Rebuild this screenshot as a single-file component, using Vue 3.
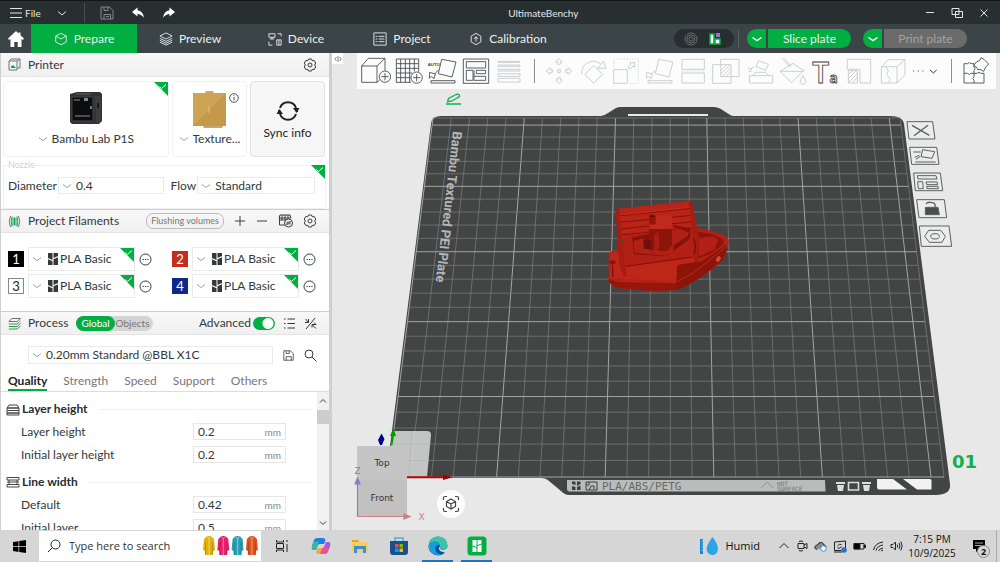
<script setup>
import { ref } from 'vue'

const tabs = [
  { name: 'Prepare', d: 'M8 1.5 14 4.5V11.5L8 14.5 2 11.5V4.5ZM2 4.5 8 8 14 4.5' },
  { name: 'Preview', d: 'M8 1 15 4.5 8 8 1 4.5ZM1 7.2 8 10.7 15 7.2M1 9.4 8 12.9 15 9.4M1 11.6 8 15 15 11.6' },
  { name: 'Device', d: 'M1 2H8V6H1ZM4.5 6V8M2 8H7M11 2H15V5M1 11V15H5M10 9H15V15H10ZM12.5 9V15' },
  { name: 'Project', d: 'M1 1H15V15H1ZM3 5H5M6.5 5H13M3 8H5M6.5 8H13M3 11H5M6.5 11H13' },
  { name: 'Calibration', d: 'M8 1.5 13.5 4.7V11.3L8 14.5 2.5 11.3V4.7ZM8 5V11M5.5 8 8 5.5 10.5 8' },
]
const activeTab = ref('Prepare')

const tools = [
  { name: 'Add', x: 90, d: 'M92 198H138V247H92ZM92 198 112 175H162L138 198M162 175V212M138 247 146 240M162 213A17 17 0 1 0 162 247 17 17 0 1 0 162 213M162 219V241M151 230H173' },
  { name: 'Add plate', x: 189, d: 'M196 177H263V215M196 177V247H240M209 177V247M223 177V247M236 177V247M250 177V214M196 191H263M196 205H263M196 219H244M196 233H239M257 216A17 17 0 1 0 257 250 17 17 0 1 0 257 216M257 222V244M246 233H268' },
  { name: 'Auto orient', x: 291, auto: true, d: 'M335 178 378 186 366 231 325 221ZM303 242H375V249H303ZM299 217 316 222 312 236 304 229 298 235ZM314 222 325 210' },
  { name: 'Arrange', x: 390, d: 'M397 177H473V250H397ZM406 185H464V204H406ZM406 211H426V241H406ZM436 211H464V221H436ZM429 229H464V241H429ZM429 211V229' },
  { name: 'Split to objects', x: 491, off: true, d: 'M503 184H569V187H503ZM503 195H569V199H503ZM503 208H569V213H503ZM503 221H569V229H503ZM503 235H569V246H503Z' },
  { sep: true },
  { name: 'Move', x: 644, off: true, d: 'M685 193V186H679L689 175 699 186H693V193ZM685 233V240H679L689 251 699 240H693V233ZM669 209H662V203L650 213 662 223V217H669ZM709 209H716V203L728 213 716 223V217H709ZM685 209H693V217H685Z' },
  { name: 'Rotate', x: 743, off: true, d: 'M790 197 817 223 790 249 763 223ZM754 222A35 35 0 0 1 811 192M802 205H826L820 183Z' },
  { name: 'Scale', x: 843, off: true, d: 'M851 209H892V250H851ZM897 205 894 201 903 193 899 188H914V202L909 198 901 206Z', dash: 'M851 201V177H925V250H898' },
  { name: 'Lay on face', x: 943, off: true, d: 'M987 178 1030 186 1018 231 977 221ZM955 242H1027V249H955ZM951 217 968 222 964 236 956 229 950 235ZM966 222 977 210' },
  { name: 'Cut', x: 1043, off: true, d: 'M1055 178H1122V208H1055ZM1055 219H1122V249H1055Z', dash: 'M1055 213H1122' },
  { name: 'Mesh boolean', x: 1145, off: true, d: 'M1174 178H1229V230H1174ZM1150 194H1205V250H1150ZM1174 212 1192 194M1174 222 1202 194M1178 230 1205 203M1190 230 1205 215' },
  { name: 'Assemble', x: 1245, off: true, d: 'M1261 227H1331V249H1261ZM1288 182 1318 193 1310 211 1281 200ZM1272 227 1279 217H1310L1319 227M1256 203 1268 207 1264 216 1258 212M1266 207 1275 200' },
  { name: 'Color painting', x: 1345, off: true, d: 'M1351 214 1390 190 1422 212 1385 248ZM1351 214H1422M1358 176 1380 200M1362 174 1384 198M1420 227Q1410 241 1412 248 1420 258 1429 248 1430 241 1420 227' },
  { name: 'Text', x: 1445, letters: true, d: '' },
  { name: 'Seam painting', x: 1545, off: true, d: 'M1555 178H1625V249H1593V208H1555ZM1558 212H1585V249H1558ZM1558 224 1570 212M1558 236 1582 212M1558 248 1585 221M1569 249 1585 233' },
  { name: 'Support painting', x: 1645, off: true, d: 'M1655 200 1677 179H1726L1702 200ZM1655 200V249H1702V200M1702 249 1726 224V179M1668 200 1676 212 1671 224 1681 236 1677 249' },
]

const filaments = [
  { n: 1, tone: 'black' },
  { n: 2, tone: 'red' },
  { n: 3, tone: 'white' },
  { n: 4, tone: 'blue' },
]

const settingTabs = ['Quality', 'Strength', 'Speed', 'Support', 'Others']
const groups = [
  { title: 'Layer height', icon: 'M3 3H11L13 6H1ZM1 6H13V8.5H1ZM1 8.5H13V11H1ZM1 11H13V13H1Z', rows: [['Layer height', '0.2'], ['Initial layer height', '0.2']] },
  { title: 'Line width', icon: 'M1 2.5H13V5H1ZM1 7H13M3 5V9M11 5V9M1 9.5H13V12H1Z', rows: [['Default', '0.42'], ['Initial layer', '0.5']] },
]

/* Build plate grid in perspective: cell width grows linearly with y. */
const TOP = 118, BOTTOM = 477, CELLS = 25.6
const WT = 18.25, WB = 21.72
const steps = [...Array(26).keys(), CELLS]
const lerp = (a, b, t) => a + (b - a) * t
const columns = steps.map(i => ({ a: 433 + WT * i, b: 388 + WB * i, major: i % 5 === 0 }))
const rows = steps.map(j => {
  const w = 1 / lerp(1 / WB, 1 / WT, j / CELLS)
  const t = (w - WT) / (WB - WT)
  return { y: lerp(TOP, BOTTOM, t), a: lerp(433, 388, t), b: lerp(433 + WT * CELLS, 388 + WB * CELLS, t), major: j % 5 === 0 }
})
const coats = ['#e2b007', '#e8206c', '#2a9fb4', '#e0501c']
</script>

<template>
  <div class="app">
    <header class="titlebar">
      <button class="file">
        <svg width="14" height="14" viewBox="0 0 14 14"><path d="M1 2.500H13M1 7H13M1 11.500H13" /></svg>
        File
      </button>
      <button class="ic" aria-label="File menu"><svg width="10" height="10" viewBox="0 0 10 10"><path d="M1 3.500 5 7 9 3.500" /></svg></button>
      <span class="tsep"></span>
      <button class="ic dim" aria-label="Save"><svg width="14" height="14" viewBox="0 0 14 14"><path d="M1 13V1H9.500L13 4.500V13ZM4 13V8.500H10.500V13M4 1V4.500H8V1M6 10.500H9" /></svg></button>
      <button class="ic solid" aria-label="Undo"><svg width="14" height="14" viewBox="0 0 14 14"><path d="M1 6 6.500 1.500V4.300Q12 5 13 12 10.500 8.300 6.500 8V10.500Z" /></svg></button>
      <button class="ic solid" aria-label="Redo"><svg width="14" height="14" viewBox="0 0 14 14"><path d="M13 6 7.500 1.500V4.300Q2 5 1 12 3.500 8.300 7.500 8V10.500Z" /></svg></button>
      <h1>UltimateBenchy</h1>
      <div class="win">
        <button class="ic" aria-label="Minimize"><svg width="12" height="12" viewBox="0 0 12 12"><path d="M2 5.500H10" /></svg></button>
        <button class="ic" aria-label="Restore"><svg width="12" height="12" viewBox="0 0 12 12"><path d="M1 1.500H8V7.500H1ZM4.500 4.500H11.500V10.500H4.500Z" /></svg></button>
        <button class="ic" aria-label="Close"><svg width="12" height="12" viewBox="0 0 12 12"><path d="M2.500 2.500 9.500 9.500M9.500 2.500 2.500 9.500" /></svg></button>
      </div>
    </header>

    <nav class="tabbar">
      <button class="home" aria-label="Home"><svg width="16" height="16" viewBox="0 0 16 16"><path d="M8 0 0 7.500 1 9 2.500 8V16H6.300V11H9.700V16H13.500V8L15 9 16 7.500 12.500 4.200V1.500H10.500V2.400Z" /></svg></button>
      <button v-for="t in tabs" :key="t.name" class="tab" :class="{ on: activeTab === t.name }" @click="activeTab = t.name">
        <svg width="14" height="14" viewBox="0 0 16 16"><path :d="t.d" /></svg>{{ t.name }}
      </button>
      <div class="actions">
        <span class="mode">
          <svg width="14" height="14" viewBox="0 0 14 14" class="swirl"><circle cx="7" cy="7" r="6" /><circle cx="7" cy="7" r="4" /><circle cx="7" cy="7" r="2" /></svg>
          <svg width="12" height="12" viewBox="0 0 12 12"><path d="M1 1H5V11H1ZM6 6H11V11H6Z" fill="#fff" stroke="#00ae42" stroke-width="1.500" /><path d="M7 0H11V4H7Z" fill="#a56bd6" /></svg>
        </span>
        <span class="tsep"></span>
        <div class="split">
          <button class="drop" aria-label="Slice options"><svg width="12" height="12" viewBox="0 0 12 12"><path d="M1.500 4.500 6 7.500 10.500 4.500" /></svg></button>
          <button class="main">Slice plate</button>
        </div>
        <div class="split">
          <button class="drop" aria-label="Print options"><svg width="12" height="12" viewBox="0 0 12 12"><path d="M1.500 4.500 6 7.500 10.500 4.500" /></svg></button>
          <button class="main off" disabled>Print plate</button>
        </div>
      </div>
    </nav>

    <div class="work">
      <aside class="side">
        <div class="head first">
          <svg width="13" height="13" viewBox="0 0 13 13"><path d="M3 1H12V10H9M1 3H9V12H1ZM3 1 1 3M12 1 9 3" /><path d="M3 10V8.500L5 7 8 10Z" fill="#00ae42" stroke="none" /></svg>
          <h2>Printer</h2>
          <button class="ic push" aria-label="Printer settings"><svg width="14" height="14" viewBox="0 0 14 14"><path d="M5.500 1H8.500L9.200 2.700 11.200 2.500 12.700 5 11.700 7 12.700 9 11.200 11.500 9.200 11.300 8.500 13H5.500L4.800 11.300 2.800 11.500 1.300 9 2.300 7 1.300 5 2.800 2.500 4.800 2.700Z" /><circle cx="7" cy="7" r="2" /></svg></button>
        </div>

        <div class="cards">
          <div class="card wide">
            <svg class="corner" width="14" height="14" viewBox="0 0 14 14"><path d="M0 0H14V14Z" fill="#00ae42" /><path d="M5.500 4.500 7.500 6.500 12 2.500" fill="none" stroke="#fff" /></svg>
            <svg width="34" height="34" viewBox="0 0 34 34">
              <path d="M1 3 8 1H31L33 3V30L30 33H3L1 31Z" fill="#303234" />
              <path d="M3 6H24V30H3Z" fill="#0c0d0e" stroke="#44474a" />
              <path d="M26 5H32V30L27 32Z" fill="#3b3e41" /><path d="M28 12H30V17H28Z" fill="#191a1b" />
              <path d="M6 25H21M5 9H11" stroke="#8c9194" /><path d="M15 7H19V10H15Z" fill="#85898c" /><path d="M22 15V18" stroke="#ddd" /><path d="M7 3H22" stroke="#626669" />
            </svg>
            <label class="pick"><svg width="10" height="8" viewBox="0 0 10 8"><path d="M1 2.500 5 5.500 9 2.500" /></svg>
              <select aria-label="Printer model"><option>Bambu Lab P1S</option></select></label>
          </div>
          <div class="card">
            <svg class="info" width="10" height="10" viewBox="0 0 10 10"><circle cx="5" cy="5" r="4.300" /><path d="M5 4V7.500M5 2.300V3.200" /></svg>
            <svg width="36" height="38" viewBox="0 0 36 38"><path d="M14 0H21L22 2H34V35H31L30 37H12L11 35H1V2H13Z" fill="#c9a867" /><path d="M1 2H34V35H1Z" fill="#cda354" /><path d="M34 2V35H1Z" fill="#c4994b" /><path d="M17 15V22" stroke="#dfc184" /></svg>
            <label class="pick"><svg width="10" height="8" viewBox="0 0 10 8"><path d="M1 2.500 5 5.500 9 2.500" /></svg>
              <select aria-label="Plate type"><option>Texture...</option></select></label>
          </div>
          <button class="card sync">
            <svg width="24" height="22" viewBox="0 0 24 22"><path d="M4 8A8.500 8.500 0 0 1 20 8M20 14A8.500 8.500 0 0 1 4 14M3 13V10M21 9V12" /><path d="M17 8H23.500L20.500 13ZM7 14H.5L3.500 9Z" class="blk" /></svg>
            Sync info
          </button>
        </div>

        <fieldset class="nozzle">
          <legend>Nozzle</legend>
          <svg class="corner" width="14" height="14" viewBox="0 0 14 14"><path d="M0 0H14V14Z" fill="#00ae42" /><path d="M5.500 4.500 7.500 6.500 12 2.500" fill="none" stroke="#fff" /></svg>
          <label for="dia">Diameter</label>
          <span class="box dia"><svg width="10" height="8" viewBox="0 0 10 8"><path d="M1 2.500 5 5.500 9 2.500" /></svg><select id="dia"><option>0.4</option></select></span>
          <label for="flow" class="second">Flow</label>
          <span class="box flow"><svg width="10" height="8" viewBox="0 0 10 8"><path d="M1 2.500 5 5.500 9 2.500" /></svg><select id="flow"><option>Standard</option></select></span>
        </fieldset>

        <div class="head">
          <svg width="13" height="13" viewBox="0 0 13 13"><path d="M2.500 1Q0 6.500 2.500 12M10.500 1Q13 6.500 10.500 12M4 1.500Q2.500 6.500 4 11.500M9 1.500Q10.500 6.500 9 11.500" /><path d="M5 2.500V10.500M6.500 2.500V10.500M8 2.500V10.500" class="grn" /></svg>
          <h2>Project Filaments</h2>
          <div class="headtools push">
            <button class="flush">Flushing volumes</button>
            <button class="ic" aria-label="Add filament"><svg width="12" height="12" viewBox="0 0 12 12"><path d="M6 1V11M1 6H11" /></svg></button>
            <button class="ic" aria-label="Remove filament"><svg width="12" height="12" viewBox="0 0 12 12"><path d="M1 6H11" /></svg></button>
            <button class="ic" aria-label="Sync filaments"><svg width="15" height="14" viewBox="0 0 15 14"><path d="M2 1H12L13 4H1ZM1.500 4V11H7M4 1V6M7 1V6M10 1V5M1 6H8" /><circle cx="10.500" cy="9" r="4" /><path d="M8.500 8.200H12.500L11.500 7M12.500 9.800H8.500L9.500 11" /></svg></button>
            <button class="ic" aria-label="Filament settings"><svg width="14" height="14" viewBox="0 0 14 14"><path d="M5.500 1H8.500L9.200 2.700 11.200 2.500 12.700 5 11.700 7 12.700 9 11.200 11.500 9.200 11.300 8.500 13H5.500L4.800 11.300 2.800 11.500 1.300 9 2.300 7 1.300 5 2.800 2.500 4.800 2.700Z" /><circle cx="7" cy="7" r="2" /></svg></button>
          </div>
        </div>

        <div class="fils">
          <div v-for="f in filaments" :key="f.n" class="fil">
            <button class="sw" :class="f.tone">{{ f.n }}</button>
            <span class="box">
              <svg width="10" height="8" viewBox="0 0 10 8"><path d="M1 2.500 5 5.500 9 2.500" /></svg>
              <svg width="10" height="12" viewBox="0 0 10 12" class="logo"><path d="M0 0H4.500V7L0 5ZM0 6.200 4.500 8.200V12H0ZM5.500 0H10V3L5.500 5ZM5.500 6.200 10 4.200V12H5.500Z" /></svg>
              <select :aria-label="'Filament ' + f.n"><option>PLA Basic</option></select>
              <svg class="corner" width="14" height="14" viewBox="0 0 14 14"><path d="M0 0H14V14Z" fill="#00ae42" /><path d="M5.500 4.500 7.500 6.500 12 2.500" fill="none" stroke="#fff" /></svg>
            </span>
            <button class="ic" :aria-label="'Edit filament ' + f.n"><svg width="13" height="13" viewBox="0 0 13 13"><circle cx="6.500" cy="6.500" r="5.500" /><path d="M3.500 6.500H4.800M5.900 6.500H7.200M8.300 6.500H9.600" /></svg></button>
          </div>
        </div>

        <div class="head">
          <svg width="13" height="13" viewBox="0 0 13 13"><path d="M4 1.500H12.500L9 4.500H.8ZM.8 7H9L12.500 4" /><path d="M.8 9.500H9L12.500 6.500" class="grn" /><path d="M.8 12H9L12.500 9" /></svg>
          <h2>Process</h2>
          <div class="seg"><button class="on">Global</button><button>Objects</button></div>
          <div class="adv push">
            <label for="adv">Advanced</label><input id="adv" type="checkbox" class="toggle" checked />
            <button class="ic" aria-label="List"><svg width="13" height="13" viewBox="0 0 13 13"><path d="M1 2H2.500M4.500 2H12M1 6.500H2.500M4.500 6.500H12M1 11H2.500M4.500 11H12" /></svg></button>
            <button class="ic" aria-label="Compare"><svg width="13" height="13" viewBox="0 0 13 13"><path d="M1 5.500H4.500V2M1.500 2 4.500 5.500M8 10.500V7.500H12M8.500 8 12 11.500M2 12 11 1M10 5.500 12 7.500" /></svg></button>
          </div>
        </div>

        <div class="preset">
          <span class="box"><svg width="10" height="8" viewBox="0 0 10 8"><path d="M1 2.500 5 5.500 9 2.500" /></svg><select aria-label="Process preset"><option>0.20mm Standard @BBL X1C</option></select></span>
          <button class="ic" aria-label="Save preset"><svg width="11" height="11" viewBox="0 0 14 14"><path d="M1 13V1H9.500L13 4.500V13ZM4 13V8.500H10.500V13M4 1V4.500H8V1" /></svg></button>
          <button class="ic" aria-label="Search settings"><svg width="13" height="13" viewBox="0 0 13 13"><circle cx="5" cy="5" r="4" /><path d="M8 8 12.500 12.500" /></svg></button>
        </div>

        <div class="stabs"><button v-for="(s, i) in settingTabs" :key="s" :class="{ on: i === 0 }">{{ s }}</button></div>

        <div class="scroll">
          <div class="list">
            <section v-for="g in groups" :key="g.title">
              <h3><svg width="14" height="14" viewBox="0 0 14 14"><path :d="g.icon" /></svg>{{ g.title }}<i></i></h3>
              <div v-for="r in g.rows" :key="r[0]" class="row">
                <label :for="g.title + r[0]">{{ r[0] }}</label>
                <span class="num"><input :id="g.title + r[0]" :value="r[1]" /><em>mm</em></span>
              </div>
            </section>
          </div>
          <div class="bar">
            <button class="ic" aria-label="Scroll up"><svg width="8" height="8" viewBox="0 0 8 8"><path d="M1 5.500 4 2.500 7 5.500" /></svg></button>
            <span class="thumb"></span>
            <button class="ic down" aria-label="Scroll down"><svg width="8" height="8" viewBox="0 0 8 8"><path d="M1 2.500 4 5.500 7 2.500" /></svg></button>
          </div>
        </div>
      </aside>

      <main class="view">
        <svg class="scene" viewBox="332 53 668 477">
          <path d="M431 124Q432 116 441 116H601Q604 116 608 113L616 108Q618 107 621 107H714Q717 107 720 108.500L731 115.500Q733 116 736 116H890Q903 116 904 124L950 484Q951 495 936 495H569Q565 495 561 491L549 481Q546 478 541 478H386Z" fill="#424544" />
          <path d="M628 114H708V116H628Z" fill="#e9e9e9" />
          <g stroke="#7d807f" stroke-width=".7">
            <line v-for="(c, i) in columns" :key="'c' + i" :x1="c.a" :x2="c.b" y1="118" y2="477" :class="{ major: c.major }" />
            <line v-for="(r, i) in rows" :key="'r' + i" :x1="r.a" :x2="r.b" :y1="r.y" :y2="r.y" :class="{ major: r.major }" />
          </g>
          <text transform="translate(453 131) rotate(96.500)" class="bed">Bambu Textured PEI Plate</text>

          <path d="M393 431H427Q431 431 431 435L427 477H388Z" fill="#d5d7d6" opacity=".88" />
          <path d="M412 431 409 477M392 444H430M390 460.500H429" stroke="#aeb1b0" stroke-width=".6" />

          <path d="M567 480H825L825.500 491.500H569Q567 491 567 489Z" fill="#b9bcbb" />
          <g fill="#3c3f3e">
            <path d="M572 481.500H575.500V485L572 484ZM572 486 575.500 487V490H572ZM577 481.500H580.500V484L577 486ZM577 487 580.500 485.500V490H577Z" />
            <path d="M586 482H597V490H586ZM586 485H589V482M589 490 591 486H594V489" fill="none" stroke="#3c3f3e" />
            <text x="602" y="489.500" class="mono">PLA/ABS/PETG</text>
            <g opacity=".6"><path d="M761 488 767 482 773 488" fill="none" stroke="#777a79" /><text x="777" y="485.500" class="tiny">HOT</text><text x="777" y="490.500" class="tiny">SURFACE</text></g>
          </g>
          <path d="M836 482H845V484H836ZM837 485H844L843 491H838ZM862 482H871V484H862ZM863 485H870L869 491H864Z" fill="#dcdedd" />
          <path d="M848.500 482.500H858.500V490H848.500Z" fill="none" stroke="#dcdedd" stroke-width="1.600" />
          <path d="M877 479H893L907 489.500H879Q877 489.500 877 487ZM903 479H930Q931.500 479 931.500 480.500V489.500H917Z" fill="#f2f2f2" />

          <g transform="translate(590 185) scale(.33333)">
            <path d="M56 202 80 195 94 190 110 160 300 128 340 131 384 143 409 156 416 168 407 208 396 228 370 250 330 278 290 302 264 315 180 317 80 309 56 292Z" fill="#b32015" />
            <path d="M56 278 85 288 258 292 310 262 360 234 411 182 407 208 396 228 330 278 290 302 264 315 180 317 80 309 56 292Z" fill="#981609" />
            <path d="M258 292 262 240 310 222 330 232 372 205 411 178 400 222 330 278 264 315Z" fill="#8c1409" />
            <path d="M322 140 370 148 402 165 398 180 362 206 326 220 312 190Z" fill="#8d160c" />
            <path d="M326 160 372 154 384 166 372 194 326 214Z" fill="#b32116" />
            <path d="M62 206 88 202 100 246 310 218 322 230 262 240 258 290 60 280Z" fill="#bd271a" />
            <path d="M78 72 302 47 316 130 96 162Z" fill="#b92318" />
            <g stroke="#82120a" stroke-width="3" fill="none"><path d="M82 93 305 70M86 112 308 91M90 132 310 110M94 150 312 128" /><path d="M90 90 302 67" stroke="#cf3728" stroke-width="2" /></g>
            <path d="M76 74 86 70 104 236 110 272 102 276 88 238Z" fill="#a81c11" />
            <path d="M296 48 304 46 326 150 324 232 312 232 308 146Z" fill="#a81c11" />
            <path d="M100 160 130 150 300 128 305 180 308 214 105 244Z" fill="#b22015" />
            <path d="M126 158 176 146 180 186 236 190 294 152 296 142 262 130 252 128 250 120 300 130 302 150 296 164 240 206 225 214 132 208Z" fill="#86130b" />
            <path d="M130 168 160 160 166 190 226 196 262 172 286 152 262 144 250 146 250 200 226 212 134 204Z" fill="#b12015" />
            <path d="M178 92 246 90 246 130 238 138 178 132Z" fill="#bf2a1d" />
            <path d="M176 132H246V180L232 198H208V160H192V196H178Z" fill="#8b140b" />
            <path d="M192 150 206 138V192H192Z" fill="#a91d12" /><path d="M160 166H184V192H162Z" fill="#70100a" />
            <ellipse cx="187" cy="95" rx="12" ry="8" fill="#a51a10" /><ellipse cx="187" cy="94" rx="6" ry="4" fill="#5f0c07" /><path d="M178 97H197V117Q187 121 178 117Z" fill="#931409" />
            <path d="M108 244 308 216" stroke="#7d110a" stroke-width="3" />
            <path d="M56 204 80 197M56 280 85 289 256 293 310 264 412 182 414 168" fill="none" stroke="#b8291c" stroke-width="3" />
            <ellipse cx="68" cy="232" rx="9" ry="6" fill="#8a140b" /><path d="M66 240H70V276H66Z" fill="#7d110a" />
            <ellipse cx="385" cy="222" rx="6" ry="9" fill="#d44a38" transform="rotate(30 385 222)" />
            <path d="M310 162Q322 176 312 206" fill="none" stroke="#7d110a" stroke-width="4" />
          </g>

          <g transform="translate(890 100) scale(.33333)" fill="none" stroke="#5c5f5e" stroke-width="3" stroke-linejoin="round">
            <path d="M51 65H128L135 117H57ZM59 142H140L147 193H65ZM71 219H151L158 272H76ZM80 299H163L170 353H87ZM88 378H177L185 439H94Z" fill="#ececec" />
            <path d="M66 76 118 106M114 76 72 107" stroke-width="4" />
            <path d="M98 149 134 155 126 175 93 170ZM76 186H137M70 156H92M74 172 88 166M78 178 90 170" />
            <path d="M82 227H138L141 237H84ZM83 245H98L100 266H85ZM108 246H141L143 254H110ZM110 259H144L145 266H111Z" />
            <path d="M106 322H144L148 344H106Z" fill="#4b4e4d" /><path d="M108 312Q112 306 122 307 134 307 135 314L136 322" stroke-width="4" />
            <path d="M104 409 116 391H152L166 409 156 427H118Z" /><ellipse cx="135" cy="409" rx="13" ry="8" />
          </g>

          <path d="M446 104H461M447.500 102 448.500 98.500 456 94.500Q460 93.500 459.500 96.500L452 101Z" fill="none" stroke="#12b350" stroke-width="1.300" />
          <text x="952" y="468" class="num01">01</text>

          <path d="M357 446H407V516H357Z" fill="#c5c5c5" />
          <path d="M357 480H407V516H357Z" fill="#c1c1c1" />
          <path d="M380.500 445V440M378 440 381.500 433.500 384.500 439 382 445H380Z" fill="#00008f" />
          <path d="M391.500 445 393 436" stroke="#00a000" stroke-width="2" /><path d="M390 436 393.500 428 396 436Z" fill="#009c00" />
          <path d="M407 477.300H444" stroke="#b80000" stroke-width="2" /><path d="M443 474.500 453 477.300 443 480Z" fill="#9c0000" />
          <g fill="none" stroke="#8181c6" stroke-width="1.200"><path d="M357.500 516V482" /><path d="M355 484 357.500 478 360 484Z" fill="#8181c6" /></g>
          <g stroke="#cb8287" stroke-width="1.200"><path d="M357 516.500H405" /><path d="M404 514 410 516.500 404 519Z" fill="#cb8287" /></g>
          <text x="382" y="466" class="face">Top</text><text x="382" y="501" class="face">Front</text>
          <text x="357.500" y="474" class="face z">Z</text><text x="421.500" y="519.500" class="face x">X</text>

          <circle cx="451" cy="504" r="14" fill="#fdfdfd" />
          <g fill="none" stroke="#454545" stroke-width="1.200"><path d="M443.500 500V498Q443.500 496.500 445 496.500H447M455 496.500H457Q458.500 496.500 458.500 498V500M458.500 508V510Q458.500 511.500 457 511.500H455M447 511.500H445Q443.500 511.500 443.500 510V508" /><path d="M451 499 455.500 501.500V506.500L451 509 446.500 506.500V501.500ZM446.500 501.500 451 504 455.500 501.500M451 504V509" /></g>
        </svg>

        <button class="collapse" aria-label="Collapse sidebar"><svg width="8" height="8" viewBox="0 0 8 8"><path d="M4 1V7M2.500 2 .8 4 2.500 6M5.500 2 7.200 4 5.500 6" /></svg></button>
        <div class="tools">
          <template v-for="(t, i) in tools" :key="i">
            <span v-if="t.sep" class="sep"></span>
            <button v-else :aria-label="t.name" :class="{ off: t.off }">
              <svg width="30" height="36" :viewBox="`${t.x} 159 90 108`">
                <path :d="t.d" />
                <path v-if="t.dash" :d="t.dash" stroke-dasharray="3 5" />
                <text v-if="t.auto" x="293" y="199" class="auto">AUTO</text>
                <template v-if="t.letters"><text x="1449" y="248" class="bigt">T</text><text x="1501" y="248" class="smalla">a</text></template>
              </svg>
            </button>
          </template>
          <button aria-label="More tools"><svg width="30" height="36" viewBox="754 159 90 108"><path d="M811 210 821 219 831 210" stroke-width="3" /><path d="M760 213H763M774 213H777M788 213H791" stroke-width="3" /></svg></button>
          <span class="sep"></span>
          <button aria-label="Assembly view"><svg width="30" height="36" viewBox="905 159 90 108"><path d="M914 191H925Q930 184 935 191H944V201Q951 206 944 211V220H935Q930 227 925 220H914ZM914 220V249H944V241Q937 236 944 230V220M944 249H974V220H964Q959 213 954 220H944M951 186 962 181 965 173 974 178 988 192 979 201 973 214 962 208 956 210 952 202 943 197Z" /></svg></button>
        </div>
      </main>
    </div>

    <footer class="task">
      <button class="start" aria-label="Start"><svg width="13" height="13" viewBox="0 0 13 13"><path d="M0 2 5.500 1.200V6.200H0ZM6.200 1.100 13 0V6.200H6.200ZM0 6.900H5.500V11.900L0 11.100ZM6.200 6.900H13V13L6.200 12Z" /></svg></button>
      <label class="search">
        <svg width="14" height="14" viewBox="0 0 14 14"><circle cx="8.500" cy="5.500" r="4.500" /><path d="M5.200 8.800 1 13" /></svg>
        <input placeholder="Type here to search" aria-label="Type here to search" />
        <svg width="58" height="22" viewBox="0 0 58 22" class="coats">
          <g v-for="(c, i) in coats" :key="c" :transform="`translate(${i * 14.300} 0)`">
            <path d="M5 1H9L12 4 13 15 11 16V20H3V16L1 15 2 4Z" :fill="c" stroke="none" />
            <path d="M5 1 7 4 9 1M7 4V20" stroke="#fff" stroke-opacity=".55" stroke-width=".8" /><path d="M3.500 7V19M10.500 7V19" stroke="#000" stroke-opacity=".18" />
          </g>
        </svg>
      </label>
      <div class="pins">
        <button aria-label="Task view"><svg width="14" height="14" viewBox="0 0 14 14" class="line"><path d="M1.500 1V3H8.500V1M1.500 4.500H8.500V9.500H1.500ZM1.500 13V11H8.500V13M12 1V3M12 5V13" /></svg></button>
        <button aria-label="Copilot"><svg width="20" height="20" viewBox="0 0 20 20"><path d="M6 2H12Q14 2 14.500 4L13 8H9Q7 8 6.500 10L5 14H3Q0 14 1 10L3 4Q4 2 6 2Z" fill="#1f7fe0" /><path d="M1 10 2.500 5.500H8L5 14H3Q0 14 1 10Z" fill="#38b79b" /><path d="M14 18H8Q6 18 5.500 16L7 12H11Q13 12 13.500 10L15 6H17Q20 6 19 10L17 16Q16 18 14 18Z" fill="#e8529a" /><path d="M5.500 16 7 12H11L9 18H8Q6 18 5.500 16Z" fill="#f5ab3c" /><path d="M15 6H17Q20 6 19 10L18.500 12H13Z" fill="#a45de0" /></svg></button>
        <button aria-label="File Explorer"><svg width="18" height="18" viewBox="0 0 18 18"><path d="M1 3H7L8 5H17V15H1Z" fill="#f9cf5c" /><path d="M1 3H7L8 5H1Z" fill="#e6a520" /><path d="M3 9H15V16H12V12H6V16H3Z" fill="#3f8fd0" /></svg></button>
        <button aria-label="Microsoft Store"><svg width="20" height="20" viewBox="0 0 20 20"><path d="M6 5V2H14V5" fill="none" stroke="#3fb5e5" stroke-width="1.500" /><path d="M1 5H19V16Q19 19 16 19H4Q1 19 1 16Z" fill="#18508f" /><path d="M6 8H9.500V11.500H6Z" fill="#f25022" /><path d="M10.500 8H14V11.500H10.500Z" fill="#7fba00" /><path d="M6 12.500H9.500V16H6Z" fill="#00a4ef" /><path d="M10.500 12.500H14V16H10.500Z" fill="#ffb900" /></svg></button>
        <button aria-label="Edge" class="run"><svg width="20" height="20" viewBox="0 0 20 20"><circle cx="10" cy="10" r="9.500" fill="#1470c4" /><path d="M1 8Q3 .5 10 .5 19 1 19.500 9 19.500 13 15 13 11 13 12 10.500 12 6 7.500 5.500 3 5.500 1 8Z" fill="#3ac6a2" /><path d="M1 8Q3 5 7.500 5.500 11 6 12 9 7 8 7 13 8 18 14 18.500 3 21 .6 12Z" fill="#1a9bdc" /><path d="M12 9Q10.500 13 14 14 17 14.500 19 13 17 18 13 18.500 7 17 8 12 9 9 12 9Z" fill="#0c4f98" /><path d="M12 10.500Q11 13 14 13.600 17 14 19 12L20 14 17.500 17 12 15 10.500 12Z" fill="#d6d6d6" /></svg></button>
        <button aria-label="Bambu Studio" class="run"><svg width="20" height="20" viewBox="0 0 20 20"><rect x=".5" y=".5" width="19" height="19" rx="3.500" fill="#00ae42" /><path d="M5.500 4H9.500V11L5.500 9.500ZM5.500 10.500 9.500 12V16H5.500ZM10.500 4H14.500V7.500L10.500 9ZM10.500 10 14.500 8.500V16H10.500Z" fill="#fff" /></svg></button>
      </div>
      <button class="weather">
        <svg width="20" height="20" viewBox="0 0 20 20"><path d="M1 3H4V18H1Z" fill="#1687d4" /><path d="M2.500 5H4M2.500 8H4M2.500 11H4M2.500 14H4" stroke="#8fd0f5" /><path d="M13.500 1Q19 8 19 13 18 19 13.500 19 8 18.500 7.500 13 8 8 13.500 1Z" fill="#2fa4e4" /></svg>
        Humid
      </button>
      <div class="tray line">
        <svg width="12" height="12" viewBox="0 0 12 12"><path d="M1.500 8 6 3.500 10.500 8" /></svg>
        <svg width="12" height="12" viewBox="0 0 12 12"><path d="M2 3.500H8V8.500H2ZM8 5 11 3.500V8.500L8 7M3 1.500Q5 .5 7 1.500M3 10.500Q5 11.500 7 10.500" /></svg>
        <svg width="13" height="12" viewBox="0 0 13 12"><path d="M3 9.500Q.5 9 .8 6.800 1.500 5 3.500 5 4.500 2 7.500 2.500 9.500 3 10 5 12 5 12 7.500" fill="#8a8d90" /><circle cx="9.500" cy="8.500" r="2.800" fill="#fff" stroke="#3d8fdd" /></svg>
        <svg width="14" height="13" viewBox="0 0 14 13"><path d="M1.500 2 12.500 1V9M1.500 2V10.500H8M1 12H9M4.500 6Q6 3.500 8.500 4.500M8.500 6.500Q7.500 9 4.500 8" /><circle cx="11" cy="10" r="2.800" fill="#2a6fd0" stroke="none" /></svg>
        <svg width="13" height="12" viewBox="0 0 13 12"><path d="M1 3.500H11V9H1Z" /><path d="M1 3.500H7V9H1ZM11 5H12.500V7.500H11Z" fill="#000" /></svg>
        <svg width="12" height="12" viewBox="0 0 12 12"><path d="M1.500 10Q3 3 11 2M4 10.500Q5 6 11 5M6.500 11Q7.500 8.500 11 8M9 11 11 10" /></svg>
        <svg width="13" height="12" viewBox="0 0 13 12"><path d="M1 4.500H3L5.500 2V10L3 7.500H1ZM7.200 4.500Q8.200 6 7.200 7.500M9 3Q11 6 9 9M10.800 1.500Q13.500 6 10.800 10.500" /></svg>
      </div>
      <time class="clock"><span>7:15 PM</span><span>10/9/2025</span></time>
      <button class="note" aria-label="Notifications"><svg width="14" height="13" viewBox="0 0 14 13"><path d="M1 0H13V9H7L4 12V9H1Z" /><path d="M3 3H11M3 5.500H9" stroke="#d6d6d6" stroke-width=".8" /></svg><b>2</b></button>
    </footer>
  </div>
</template>

<style>
html, body { margin: 0; overflow: hidden; }
</style>

<style scoped>
.app { height: 100vh; display: flex; flex-direction: column; font: 12px/16px Lato, "Open Sans", sans-serif; color: #32393c; background: #e8e8e8; }
button, select, input { font: inherit; color: inherit; background: none; border: 0; padding: 0; margin: 0; outline: 0; min-width: 0; }
select { appearance: none; }
h1, h2, h3 { margin: 0; font: inherit; }
svg { display: block; flex: none; fill: none; }
button { display: flex; align-items: center; justify-content: center; }
.ic svg, .head > svg { stroke: currentColor; }
.push { margin-left: auto; }

.titlebar { height: 24px; flex: none; display: flex; align-items: center; background: #272f31; color: #e4e6e6; border-top: 1px solid #12181a; box-sizing: border-box; }
.file { padding-left: 9px; gap: 2px; font-size: 10px; }
.file svg { stroke: #e4e6e6; }
.titlebar > .ic { width: 31px; }
.titlebar .file + .ic { width: 43px; }
.tsep { width: 1px; height: 20px; background: #465053; }
.titlebar .tsep { margin-right: 7px; }
.titlebar .dim { color: #83898b; }
.solid svg { fill: #fff; stroke: none; }
.titlebar h1 { flex: 1; text-align: center; font-size: 10px; padding-right: 22px; }
.win { display: flex; gap: 15px; padding-right: 10px; }

.tabbar { height: 29px; flex: none; display: flex; background: #3b4446; color: #eef0f0; }
.home { width: 31px; }
.home svg { fill: #fff; }
.tab { width: 106px; gap: 6px; }
.tab svg { stroke: currentColor; }
.tab.on { background: #00ae42; }
.actions { margin-left: auto; margin-right: 33px; display: flex; align-items: center; }
.mode { display: flex; align-items: center; gap: 11px; padding: 0 13px 0 10px; height: 19px; border-radius: 10px; background: #262e30; }
.swirl { stroke: #6b7173; }
.actions .tsep { margin: 0 8px 0 4px; height: 18px; background: #566063; }
.split { display: flex; gap: 2px; }
.split + .split { margin-left: 12px; }
.drop { width: 19px; height: 19px; background: #00ae42; border-radius: 10px 0 0 10px; }
.drop svg { stroke: #fff; stroke-width: 1.5; }
.main { width: 83px; background: #00ae42; border-radius: 0 10px 10px 0; }
.off.main { background: #6b6b6b; color: #a3a3a3; }

.work { flex: 1; display: flex; min-height: 0; }
.side { width: 328px; flex: none; display: flex; flex-direction: column; background: #fff; border-right: 3px solid #cfcfcf; border-left: 1px solid #cfcfcf; min-height: 0; }
.head { height: 24px; flex: none; display: flex; align-items: center; padding: 0 12px 0 7px; background: linear-gradient(#f8f8f8, #f0f0f0); border-top: 1px solid #ccc; border-bottom: 1px solid #e4e4e4; box-sizing: border-box; }
.head.first { border-top: 0; }
.head h2 { margin-left: 7px; }
.head > svg { color: #6e7476; }
.head .grn { stroke: #00ae42; }
.cards { display: flex; gap: 3px; padding: 4px 4px 0 2px; height: 76px; flex: none; }
.card { width: 75px; flex: none; box-sizing: border-box; border: 1px solid #f1f1f1; border-radius: 4px; position: relative; display: flex; flex-direction: column; align-items: center; padding-top: 9px; }
.card.wide { flex: 1; }
.card .pick { margin-top: auto; margin-bottom: 9px; }
.corner { position: absolute; top: 0; right: 0; }
.info { position: absolute; top: 11px; right: 7px; stroke: #555; }
.pick { display: flex; align-items: center; gap: 4px; }
.pick svg, .box > svg:first-child { stroke: #9fa3a4; }
.sync { background: #f6f6f6; border-color: #e2e2e2; justify-content: center; gap: 3px; padding: 2px 0 0; color: #222; }
.sync svg { stroke: #222; stroke-width: 2; }
.sync .blk { fill: #222; stroke: none; }
.nozzle { margin: 0 3px 0 2px; padding: 4px 10px 12px 4px; height: 34px; border: 1px solid #f0f0f0; display: flex; align-items: center; position: relative; flex: none; }
.nozzle .corner { top: -8px; }
.nozzle legend { font-size: 9px; line-height: 16px; padding: 0; color: #d2d2d2; }
.nozzle label { flex: none; margin-right: 1px; }
.nozzle .second { margin-left: 6px; }
.box { position: relative; flex: 1; display: flex; align-items: center; gap: 4px; min-width: 0; padding-left: 3px; height: 17px; box-sizing: border-box; border: 1px solid #eaeaea; }
.nozzle .dia { flex: 107; }
.nozzle .flow { flex: 119; }
.box select { flex: 1; }
.headtools { display: flex; align-items: center; gap: 10px; color: #3a3f41; }
.flush { font-size: 9px; height: 16px; line-height: 14px; padding: 0 4px; border: 1px solid #bbb; border-radius: 7px; color: #777; box-sizing: border-box; }
.fils { height: 78px; flex: none; display: grid; grid-template-columns: 164px 1fr; align-content: start; gap: 3px 0; padding: 14px 0 0 7px; box-sizing: border-box; }
.fil { display: flex; align-items: center; }
.fil .box { height: 24px; margin: 0 4px; flex: 0 0 107px; }
.logo { fill: #33383a; margin-left: 2px; }
.fil .box select { margin-left: -2px; }
.sw { width: 16px; height: 16px; color: #fff; font-size: 13px; box-sizing: border-box; }
.black { background: #000; }
.red { background: #c12e1f; }
.blue { background: #0a2989; }
.white { background: #fff; color: #222; border: 1px solid #888; }
.seg { display: flex; margin-left: 8px; background: #d4d4d4; border-radius: 8px; font-size: 10px; line-height: 15px; color: #747474; }
.seg button { height: 15px; padding: 0 3px 0 1px; }
.seg .on { background: #00ae42; color: #fff; border-radius: 8px; padding: 0 5px; }
.adv { display: flex; align-items: center; gap: 8px; color: #32393c; }
.adv label { margin-right: -6px; }
.toggle { appearance: none; width: 22px; height: 13px; border-radius: 7px; background: radial-gradient(circle at 15px 50%, #fff 5px, #00ae42 6px); }
.preset { display: flex; align-items: center; gap: 10px; padding: 11px 12px 9px 27px; flex: none; }
.preset .box { height: 18px; }
.stabs { display: flex; gap: 16px; padding-left: 7px; border-bottom: 1px solid #dcdcdc; color: #777; flex: none; }
.stabs button { height: 18px; border-bottom: 2px solid transparent; box-sizing: border-box; line-height: 16px; }
.stabs .on { color: #222; font-weight: 700; border-color: #00ae42; }
.scroll { flex: 1; min-height: 0; display: flex; overflow: hidden; }
.list { flex: 1; padding: 6px 5px 0 5px; }
section + section { margin-top: 5px; }
h3 { height: 22px; display: flex; align-items: center; gap: 2px; color: #262e30; }
.list h3 { font-weight: 700; }
h3 svg { stroke: #444; }
h3 i { flex: 1; height: 1px; background: #f0f0f0; margin-left: 8px; }
.row { height: 23px; display: flex; align-items: center; padding-left: 15px; }
.row label { width: 172px; }
.num { width: 93px; height: 17px; box-sizing: border-box; display: flex; align-items: center; border: 1px solid #e6e6e6; padding: 0 4px; }
.num input { flex: 1; }
.num em { font-style: normal; font-size: 10px; color: #888; }
.bar { width: 12px; background: #f1f1f1; display: flex; flex-direction: column; }
.bar .ic { height: 18px; }
.thumb { height: 14px; background: #cdcdcd; }
.bar .down { margin-top: auto; height: 14px; }

.view { flex: 1; min-width: 0; position: relative; display: flex; align-items: flex-start; background: #e8e8e8; overflow: hidden; }
.scene { position: absolute; inset: 0; width: 100%; height: 100%; }
.major { stroke: #a2a5a4; stroke-width: 1; }
.bed { font: 700 13px Roboto, sans-serif; fill: #b4b7b6; }
.mono { font: 11px "DejaVu Sans Mono", monospace; fill: #666968; }
.tiny { font: 6px "DejaVu Sans Mono", monospace; }
.num01 { font: 700 18px "DejaVu Sans", sans-serif; fill: #12b04c; }
.face { font: 9px "DejaVu Sans", sans-serif; fill: #333; text-anchor: middle; }
.face.z { fill: #8181a6; }
.face.x { fill: #cb8287; }
.collapse { position: relative; width: 11px; height: 11px; background: #fff; margin-right: 14px; flex: none; }
.collapse svg { stroke: #666; stroke-width: .8; }
.tools { position: relative; flex: 1; display: flex; align-items: center; height: 36px; background: #fcfcfc; padding: 0 3px 0 2px; margin-right: 4px; }
.tools button { flex: 1; }
.tools svg { stroke: #3d4244; stroke-width: 2.5; }
.tools .off svg { stroke: #c3c6c7; }
.sep { width: 1px; height: 24px; margin: 0 8px; background: #8a8e8f; }
.auto { font: 700 13px "Liberation Sans", sans-serif; fill: #3d4244; stroke: none; }
.bigt { font: 700 84px Lato, sans-serif; }
.smalla { font: 700 46px Lato, sans-serif; }

.task { height: 32px; flex: none; display: flex; background: #d6d6d6; color: #111; font: 11px/14px "Open Sans", "Noto Sans", sans-serif; }
.start { width: 39px; }
.start svg { fill: #000; }
.search { width: 222px; flex: none; display: flex; align-items: center; background: #fff; border: 1px solid #d6d6d6; border-width: 1px 0; padding: 0 0 0 8px; gap: 8px; box-sizing: border-box; }
.search svg { stroke: #222; }
.search input { flex: 1; }
.search input::placeholder { color: #333; opacity: 1; }
.coats { margin-right: 1px; }
.pins { display: flex; padding-left: 1px; }
.pins button { width: 39px; box-sizing: border-box; }
.pins .run { position: relative; }
.run::after { content: ""; position: absolute; left: 4px; right: 4px; bottom: 0; height: 2px; background: #0e78d4; }
.line, .line svg { stroke: #222; }
.weather { margin-left: auto; gap: 6px; }
.tray { display: flex; align-items: center; gap: 6px; margin-left: 18px; }
.clock { display: flex; flex-direction: column; align-items: center; justify-content: center; width: 58px; font-size: 10px; }
.note { width: 36px; position: relative; border-right: 1px solid #aaa; margin-right: 3px; }
.note svg { fill: #000; }
.note b { position: absolute; left: 16px; top: 15px; width: 11px; height: 11px; border: 1px solid #888; border-radius: 50%; background: #d6d6d6; font: 700 9px/11px "Open Sans", sans-serif; text-align: center; }
</style>
